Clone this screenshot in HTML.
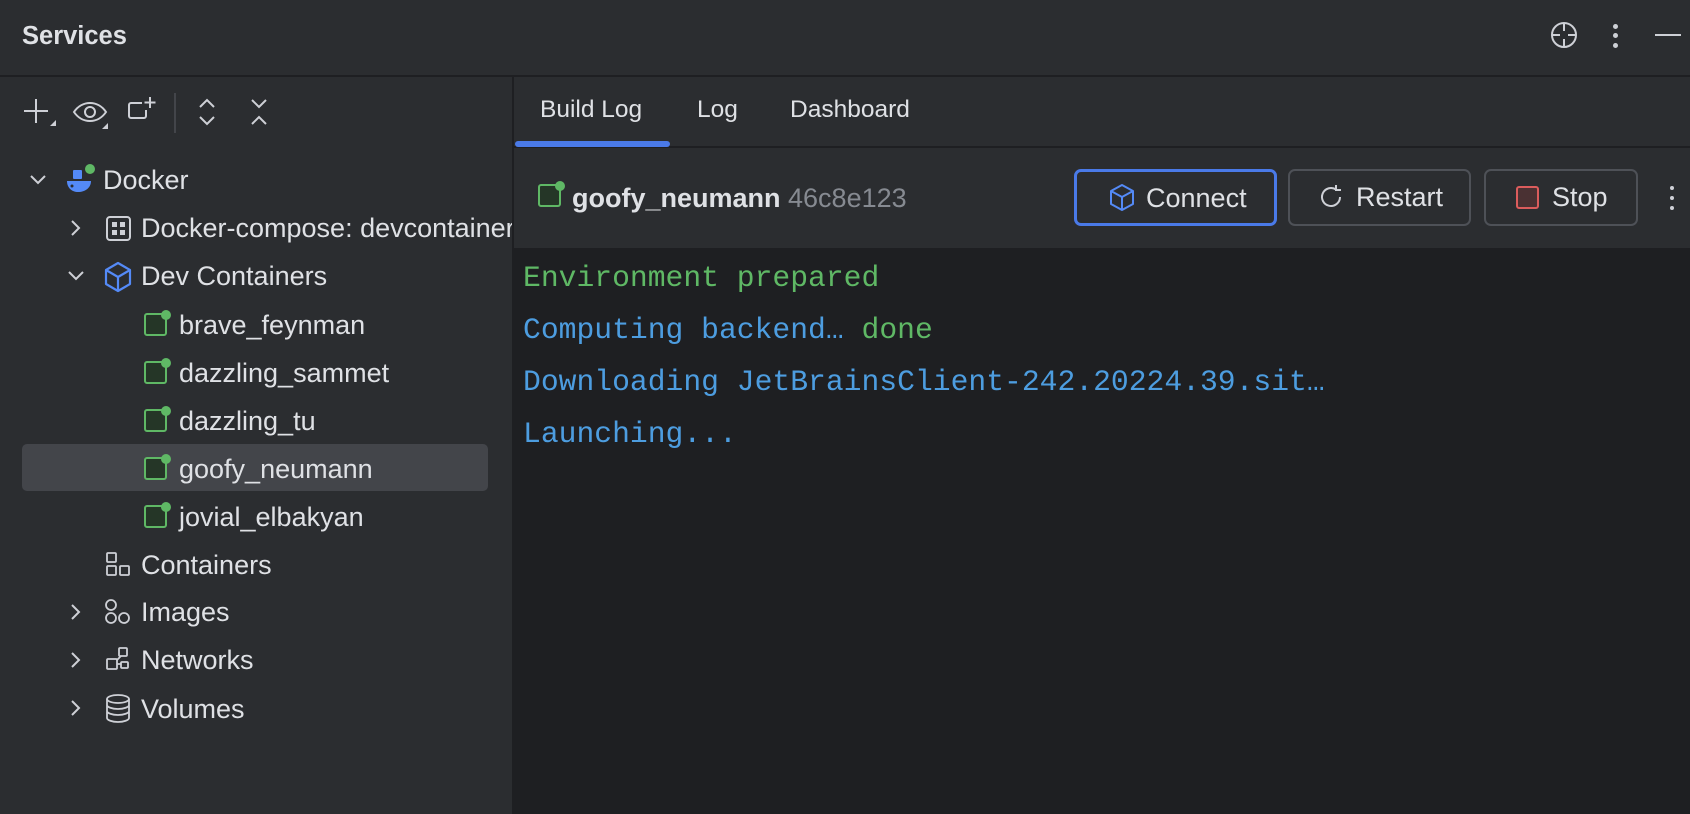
<!DOCTYPE html>
<html><head><meta charset="utf-8"><style>
*{margin:0;padding:0;box-sizing:border-box}
body{width:1690px;height:814px;background:#2b2d30;font-family:"Liberation Sans",sans-serif;color:#dfe1e5;position:relative;overflow:hidden}
.a{position:absolute}
.t{position:absolute;font-size:27px;line-height:30px;white-space:nowrap}
.mono{position:absolute;font-family:"Liberation Mono",monospace;font-size:29.7px;line-height:34px;white-space:nowrap}
svg{position:absolute;overflow:visible}
.btn{position:absolute;border:2px solid #4e5157;border-radius:7px;height:57px;top:169px;font-size:27px;line-height:53px}
.clip{position:absolute;left:0;top:77px;width:512px;height:737px;overflow:hidden}
</style></head><body>
<div class="t" style="left:22px;top:21px;font-weight:bold;font-size:25.5px">Services</div>
<svg style="left:1550px;top:21px" width="28" height="28" viewBox="0 0 28 28" fill="none" stroke="#ced0d6" stroke-width="2"><circle cx="14" cy="14" r="12"/><path d="M14 2v8M14 18v8M2 14h8M18 14h8"/></svg>
<div class="a" style="left:1613px;top:24px;width:5px;height:5px;border-radius:3px;background:#ced0d6"></div>
<div class="a" style="left:1613px;top:33px;width:5px;height:5px;border-radius:3px;background:#ced0d6"></div>
<div class="a" style="left:1613px;top:43px;width:5px;height:5px;border-radius:3px;background:#ced0d6"></div>
<div class="a" style="left:1655px;top:34px;width:26px;height:2px;background:#ced0d6"></div>
<div class="a" style="left:0;top:75px;width:1690px;height:2px;background:#1e1f22"></div>
<div class="a" style="left:512px;top:77px;width:2px;height:737px;background:#1e1f22"></div>
<!-- toolbar -->
<svg style="left:22px;top:96px" width="40" height="32" fill="none" stroke="#ced0d6" stroke-width="2"><path d="M14 3v24M2 15h24"/><path d="M34 24l0 6-6 0z" fill="#ced0d6" stroke="none"/></svg>
<svg style="left:73px;top:98px" width="40" height="32" fill="none" stroke="#ced0d6" stroke-width="2"><path d="M1 14c8-12 24-12 32 0c-8 12-24 12-32 0z"/><circle cx="17" cy="14" r="5"/><path d="M35 25v6h-6z" fill="#ced0d6" stroke="none"/></svg>
<svg style="left:128px;top:96px" width="32" height="30" fill="none" stroke="#ced0d6" stroke-width="2"><path d="M14 7H3a2 2 0 0 0-2 2v11a2 2 0 0 0 2 2h13a2 2 0 0 0 2-2v-6M22 1v11M16.5 6.5h11"/></svg>
<div class="a" style="left:174px;top:93px;width:2px;height:40px;background:#43454a"></div>
<svg style="left:198px;top:98px" width="20" height="30" fill="none" stroke="#ced0d6" stroke-width="2"><path d="M2 9l7-7 7 7M2 19l7 7 7-7"/></svg>
<svg style="left:250px;top:98px" width="20" height="30" fill="none" stroke="#ced0d6" stroke-width="2"><path d="M2 2l7 7 7-7M2 26l7-7 7 7"/></svg>
<!-- tree -->
<div class="clip"><div style="position:absolute;left:0;top:-77px;width:1690px;height:814px">
<div class="a" style="left:22px;top:444px;width:466px;height:47px;border-radius:5px;background:#43454a"></div>
<svg style="left:30px;top:174px" width="16" height="12" fill="none" stroke="#ced0d6" stroke-width="2"><path d="M1 2l7 7 7-7"/></svg>
<svg style="left:66px;top:164px" width="30" height="30"><rect x="7" y="6" width="9" height="9" rx="1" fill="#548af7"/><path d="M1 17h24c0 7-6 11-13 11-6 0-11-4-11-11z" fill="#548af7"/><circle cx="6" cy="22" r="1.5" fill="#2b2d30"/><circle cx="24" cy="5" r="5" fill="#5fb865"/></svg>
<div class="t" style="left:103px;top:165px">Docker</div>
<svg style="left:70px;top:220px" width="12" height="16" fill="none" stroke="#ced0d6" stroke-width="2"><path d="M2 1l7 7-7 7"/></svg>
<svg style="left:106px;top:216px" width="26" height="26" fill="none" stroke="#ced0d6" stroke-width="2"><rect x="1" y="1" width="23" height="23" rx="3"/><rect x="6" y="6" width="5" height="5" fill="#ced0d6" stroke="none"/><rect x="14" y="6" width="5" height="5" fill="#ced0d6" stroke="none"/><rect x="6" y="14" width="5" height="5" fill="#ced0d6" stroke="none"/><rect x="14" y="14" width="5" height="5" fill="#ced0d6" stroke="none"/></svg>
<div class="t" style="left:141px;top:213px">Docker-compose: devcontainer</div>
<svg style="left:68px;top:270px" width="16" height="12" fill="none" stroke="#ced0d6" stroke-width="2"><path d="M1 2l7 7 7-7"/></svg>
<svg style="left:104px;top:262px" width="28" height="30" fill="none" stroke="#548af7" stroke-width="2.2" stroke-linejoin="round"><path d="M14 1l12 7v14l-12 7-12-7V8z M2 8l12 7 12-7 M14 15v14"/></svg>
<div class="t" style="left:141px;top:261px">Dev Containers</div>

<svg style="left:144px;top:310px" width="30" height="30"><rect x="1" y="4" width="21" height="21" rx="2" fill="#253627" stroke="#5fb865" stroke-width="2"/><circle cx="22" cy="5" r="5" fill="#5fb865"/></svg>
<div class="t" style="left:179px;top:310px">brave_feynman</div>
<svg style="left:144px;top:358px" width="30" height="30"><rect x="1" y="4" width="21" height="21" rx="2" fill="#253627" stroke="#5fb865" stroke-width="2"/><circle cx="22" cy="5" r="5" fill="#5fb865"/></svg>
<div class="t" style="left:179px;top:358px">dazzling_sammet</div>
<svg style="left:144px;top:406px" width="30" height="30"><rect x="1" y="4" width="21" height="21" rx="2" fill="#253627" stroke="#5fb865" stroke-width="2"/><circle cx="22" cy="5" r="5" fill="#5fb865"/></svg>
<div class="t" style="left:179px;top:406px">dazzling_tu</div>
<svg style="left:144px;top:454px" width="30" height="30"><rect x="1" y="4" width="21" height="21" rx="2" fill="#253627" stroke="#5fb865" stroke-width="2"/><circle cx="22" cy="5" r="5" fill="#5fb865"/></svg>
<div class="t" style="left:179px;top:454px">goofy_neumann</div>
<svg style="left:144px;top:502px" width="30" height="30"><rect x="1" y="4" width="21" height="21" rx="2" fill="#253627" stroke="#5fb865" stroke-width="2"/><circle cx="22" cy="5" r="5" fill="#5fb865"/></svg>
<div class="t" style="left:179px;top:502px">jovial_elbakyan</div>

<svg style="left:106px;top:552px" width="26" height="26" fill="none" stroke="#ced0d6" stroke-width="1.8"><rect x="1" y="1" width="9" height="9" rx="1"/><rect x="1" y="14" width="9" height="9" rx="1"/><rect x="14" y="14" width="9" height="9" rx="1"/></svg>
<div class="t" style="left:141px;top:550px">Containers</div>
<svg style="left:70px;top:604px" width="12" height="16" fill="none" stroke="#ced0d6" stroke-width="2"><path d="M2 1l7 7-7 7"/></svg>
<svg style="left:105px;top:599px" width="28" height="28" fill="none" stroke="#ced0d6" stroke-width="1.8"><circle cx="6" cy="6" r="5"/><circle cx="6" cy="19" r="5"/><circle cx="19" cy="19" r="5"/></svg>
<div class="t" style="left:141px;top:597px">Images</div>
<svg style="left:70px;top:652px" width="12" height="16" fill="none" stroke="#ced0d6" stroke-width="2"><path d="M2 1l7 7-7 7"/></svg>
<svg style="left:106px;top:647px" width="26" height="26" fill="none" stroke="#ced0d6" stroke-width="1.8"><rect x="1" y="12" width="10" height="10" rx="1"/><rect x="13" y="1" width="8" height="8" rx="1"/><rect x="15" y="15" width="7" height="6" rx="1"/><path d="M11 17h4M15 9l-4 4"/></svg>
<div class="t" style="left:141px;top:645px">Networks</div>
<svg style="left:70px;top:700px" width="12" height="16" fill="none" stroke="#ced0d6" stroke-width="2"><path d="M2 1l7 7-7 7"/></svg>
<svg style="left:106px;top:694px" width="26" height="30" fill="none" stroke="#ced0d6" stroke-width="1.8"><ellipse cx="12" cy="5" rx="11" ry="4"/><path d="M1 5v19c0 2 5 4 11 4s11-2 11-4V5M1 11c0 2 5 4 11 4s11-2 11-4M1 17c0 2 5 4 11 4s11-2 11-4"/></svg>
<div class="t" style="left:141px;top:694px">Volumes</div>
</div></div>

<!-- right -->
<div class="t" style="left:540px;top:95px;font-size:24.5px">Build Log</div>
<div class="t" style="left:697px;top:95px;font-size:24.5px">Log</div>
<div class="t" style="left:790px;top:95px;font-size:24.5px">Dashboard</div>
<div class="a" style="left:514px;top:146px;width:1176px;height:2px;background:#1e1f22"></div>
<div class="a" style="left:515px;top:141px;width:155px;height:6px;border-radius:3px;background:#4a7ae8"></div>
<div class="a" style="left:514px;top:248px;width:1176px;height:566px;background:#1e1f22"></div>
<svg style="left:538px;top:181px" width="30" height="30"><rect x="1" y="4" width="21" height="21" rx="2" fill="#253627" stroke="#5fb865" stroke-width="2"/><circle cx="22" cy="5" r="5" fill="#5fb865"/></svg>
<div class="t" style="left:572px;top:183px;font-weight:bold">goofy_neumann <span style="font-weight:normal;color:#868a91">46c8e123</span></div>
<div class="btn" style="left:1074px;width:203px;border:3px solid #4a7ae8"><svg style="left:32px;top:12px" width="26" height="28" fill="none" stroke="#548af7" stroke-width="2" stroke-linejoin="round"><path d="M13 1l11 6v13l-11 6-11-6V7z M2 7l11 6 11-6 M13 13v13"/></svg><span style="position:absolute;left:69px;top:0">Connect</span></div>
<div class="btn" style="left:1288px;width:183px"><svg style="left:30px;top:13px" width="24" height="26" fill="none" stroke="#ced0d6" stroke-width="2"><path d="M20 13a9 9 0 1 1-4-7.5M16 1v5h5"/></svg><span style="position:absolute;left:66px;top:0">Restart</span></div>
<div class="btn" style="left:1484px;width:154px"><div class="a" style="left:30px;top:15px;width:23px;height:23px;border-radius:3px;background:#4a3133;border:2px solid #db5c5c"></div><span style="position:absolute;left:66px;top:0">Stop</span></div>
<div class="a" style="left:1670px;top:186px;width:4px;height:4px;border-radius:2px;background:#ced0d6"></div>
<div class="a" style="left:1670px;top:196px;width:4px;height:4px;border-radius:2px;background:#ced0d6"></div>
<div class="a" style="left:1670px;top:206px;width:4px;height:4px;border-radius:2px;background:#ced0d6"></div>
<div class="mono" style="left:523px;top:261px;color:#5fb865">Environment prepared</div>
<div class="mono" style="left:523px;top:313px;color:#4d9de0">Computing backend… <span style="color:#5fb865">done</span></div>
<div class="mono" style="left:523px;top:365px;color:#4d9de0">Downloading JetBrainsClient-242.20224.39.sit…</div>
<div class="mono" style="left:523px;top:417px;color:#4d9de0">Launching...</div>
</body></html>
